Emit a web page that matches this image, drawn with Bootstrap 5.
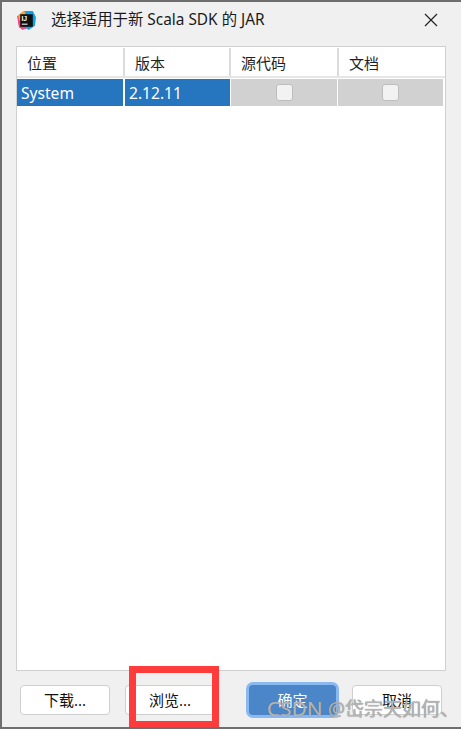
<!DOCTYPE html>
<html lang="zh">
<head>
<meta charset="utf-8">
<title>选择适用于新 Scala SDK 的 JAR</title>
<link rel="stylesheet" href="https://cdn.jsdelivr.net/npm/bootstrap@5.3.0/dist/css/bootstrap.min.css">
<style>
html,body{height:100%;margin:0}
body{background:#f0f0f0;font-family:"Liberation Sans","Noto Sans CJK SC",sans-serif;overflow:hidden}
.dlg{width:461px;height:729px;position:relative;background:#f0f0f0;border-top:2px solid #6e6e6e;border-left:2px solid #6e6e6e}
.dlg::after{content:"";position:absolute;left:-2px;right:0;top:725px;height:2px;background:#6e6e6e}
.titlebar{height:44px;padding-left:14px;padding-bottom:8px;color:#1a1a1a;font-size:15.4px;font-family:"Noto Sans","Noto Sans CJK SC",sans-serif}
.titletxt{margin-left:14px;margin-top:-1px}
.closex{margin-right:23px;margin-top:-1px}
.grid-wrap{width:430px;height:625px;margin-left:14px;background:#fff;border:1px solid #d0d0d0;font-family:"Noto Sans","Noto Sans CJK SC",sans-serif;font-size:15px}
.hdr{height:31px;border-bottom:2px solid #e6e6e6;color:#1f1f1f}
.hcell{height:28px;margin-top:1px;padding-left:10px;line-height:31px;border-right:2px solid #dcdcdc}
.c1{width:108px}.c2{width:106px}.c3{width:108px}.c4{width:106px;border-right:0}
.rowx{height:27px;margin-top:1px}
.sel{background:#2675bf;color:#fff;line-height:29px;padding-left:4px;height:27px;font-size:15.6px}
.cellsel1{width:106px;margin-right:2px}.cellsel2{width:105px;margin-right:1px;padding-left:4px}
.gray{background:#d1d1d1;height:27px;width:106px;margin-right:1px}
.gray.last{width:105px;margin-right:0}
.tick{width:17px;height:17px;background:#f2f2f2;border:1px solid #bdbdbd;border-radius:3px}
.footbar{margin-top:11px;padding-left:18px;height:36px;position:relative}
.pbtn{width:90px;height:30px;background:#fff;border:1px solid #cfcfcf;border-radius:4px;font-size:15px;line-height:28px;padding:0;color:#111;font-family:"Noto Sans","Noto Sans CJK SC",sans-serif;text-align:center}
.okb{width:87px;height:30px;background:#4a86c8;border:0;border-radius:4px;color:#fff;box-shadow:0 0 0 3px #8ab8f0;font-size:15px;line-height:29px;padding:0;margin-left:34px;margin-right:16px;font-family:"Noto Sans","Noto Sans CJK SC",sans-serif}
.b2{margin-left:15px}
.redbox{position:absolute;left:127px;top:664px;width:90px;height:63px;border:7px solid #ff3b3b;border-bottom-width:8px}
.wm{position:absolute;left:265px;top:692px;font-size:19px;line-height:28px;color:#b5b5b5;font-family:"Noto Sans","Noto Sans CJK SC",sans-serif;white-space:nowrap;text-shadow:0 0 1px #777}
.wm i{font-style:normal;font-size:20.5px;letter-spacing:.3px}
</style>
</head>
<body>
<div class="dlg">
  <div class="titlebar d-flex align-items-center">
    <svg width="21" height="21" viewBox="0 0 20 20" aria-hidden="true">
      <path d="M1 6 8 1l5 2-3 15-7-1z" fill="#ff3d8b"/>
      <path d="M2 5 7 1l4 3-8 6z" fill="#ffa726"/>
      <path d="M9 1h7l3 6-1 8-6 4-4-3z" fill="#08a5ee"/>
      <path d="M2 11l4 6 6-1-6 3-3-3z" fill="#fc3f72"/>
      <rect x="4" y="4" width="12" height="12" fill="#111"/>
      <text x="5.2" y="10.6" font-size="6.5" font-family="Liberation Sans" font-weight="700" fill="#fff">IJ</text>
      <rect x="5.5" y="13" width="5.5" height="1" fill="#fff"/>
    </svg>
    <span class="titletxt">选择适用于新 Scala SDK 的 JAR</span>
    <svg class="closex ms-auto" width="14" height="14" viewBox="0 0 14 14" aria-hidden="true"><path d="M1 1 13 13M13 1 1 13" stroke="#222" stroke-width="1.2" fill="none"/></svg>
  </div>
  <div class="grid-wrap">
    <div class="hdr d-flex">
      <div class="hcell c1">位置</div>
      <div class="hcell c2">版本</div>
      <div class="hcell c3">源代码</div>
      <div class="hcell c4">文档</div>
    </div>
    <div class="rowx d-flex">
      <div class="sel cellsel1">System</div>
      <div class="sel cellsel2">2.12.11</div>
      <div class="gray d-flex align-items-center justify-content-center"><div class="tick"></div></div>
      <div class="gray last d-flex align-items-center justify-content-center"><div class="tick"></div></div>
    </div>
  </div>
  <div class="footbar d-flex align-items-center">
    <button class="pbtn" type="button">下载...</button>
    <button class="pbtn b2" type="button">浏览...</button>
    <button class="okb" type="button">确定</button>
    <button class="pbtn" type="button">取消</button>
  </div>
  <div class="redbox"></div>
  <div class="wm"><i>CSDN</i> @岱宗天如何、</div>
</div>
</body>
</html>
